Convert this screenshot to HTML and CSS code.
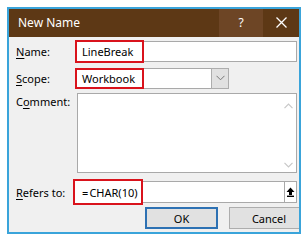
FILE: index.html
```html
<!DOCTYPE html>
<html>
<head>
<meta charset="utf-8">
<link rel="stylesheet" href="styles.css">
</head>
<body>
<div class="dialog">
  <div class="titlebar">
    <span class="title">New Name</span>
    <span class="help">?</span>
    <span class="close">
      <svg width="11" height="11" viewBox="0 0 11 11"><path d="M0.5 0.5 L10.5 10.5 M10.5 0.5 L0.5 10.5" stroke="#fff" stroke-width="1.3" fill="none"/></svg>
    </span>
  </div>
  <div class="content">
    <div class="row r-name">
      <label class="lbl"><u>N</u>ame:</label>
      <div class="field"><span class="hl">LineBreak</span></div>
    </div>
    <div class="row r-scope">
      <label class="lbl"><u>S</u>cope:</label>
      <div class="field select"><span class="hl">Workbook</span>
        <span class="dd"><svg width="9" height="6" viewBox="0 0 9 6"><path d="M0.5 0.8 L4.5 4.8 L8.5 0.8" stroke="#777" stroke-width="1" fill="none"/></svg></span>
      </div>
    </div>
    <div class="row r-comment">
      <label class="lbl lbl-top">C<u>o</u>mment:</label>
      <div class="textarea">
        <div class="scroll">
          <svg width="9" height="6" viewBox="0 0 9 6"><path d="M0.5 5.2 L4.5 1.2 L8.5 5.2" stroke="#c8c8c8" stroke-width="1.2" fill="none"/></svg>
          <svg width="9" height="6" viewBox="0 0 9 6"><path d="M0.5 0.8 L4.5 4.8 L8.5 0.8" stroke="#c8c8c8" stroke-width="1.2" fill="none"/></svg>
        </div>
      </div>
    </div>
    <div class="row r-refers">
      <label class="lbl"><u>R</u>efers to:</label>
      <div class="ref">
        <span class="hl hl-ref">=&#8202;CHAR(10)</span>
        <span class="refbtn"><svg width="9" height="10" viewBox="0 0 9 10"><path d="M4.5 0.5 L8.5 5 L6 5 L6 8 L3 8 L3 5 L0.5 5 Z" fill="#000"/><rect x="1" y="8.6" width="7" height="1.4" fill="#000"/></svg></span>
      </div>
    </div>
    <div class="row r-buttons">
      <button class="btn ok">OK</button>
      <button class="btn cancel">Cancel</button>
    </div>
  </div>
</div>
</body>
</html>
```
FILE: styles.css
```css
* { box-sizing: border-box; }
html, body { margin: 0; padding: 0; background: #fff; }
body {
  font-family: "Noto Sans", "Open Sans", sans-serif;
  font-size: 11px;
  color: #000;
  width: 307px;
  height: 241px;
  overflow: hidden;
}
.dialog {
  margin: 7px 0 0 7px;
  width: 294px;
  height: 227px;
  border: 2px solid #3aa4da;
  background: #f0f0f0;
  display: flex;
  flex-direction: column;
  overflow: hidden;
}
.titlebar {
  height: 28px;
  background: #5d3815;
  display: flex;
  align-items: stretch;
  color: #fff;
  flex: none;
}
.title {
  flex: 1;
  padding-left: 9px;
  font-size: 12px;
  line-height: 28px;
}
.help {
  width: 44px;
  background: #6d4525;
  text-align: center;
  font-size: 12px;
  line-height: 28px;
}
.close {
  width: 36px;
  display: flex;
  align-items: center;
  justify-content: center;
  padding-bottom: 1px;
}
.content {
  flex: 1;
  padding: 3px 2px 0 7px;
  display: flex;
  flex-direction: column;
}
.row { display: flex; align-items: center; }
.lbl {
  width: 59px;
  flex: none;
  white-space: nowrap;
}
.lbl u { text-decoration-thickness: 1px; text-underline-offset: 2px; }
.r-name { height: 23px; }
.r-scope { height: 22px; margin-top: 4px; }
.r-comment { height: 80px; margin-top: 4px; align-items: flex-start; }
.r-refers { height: 26px; margin-top: 6px; }
.r-buttons { height: 22px; margin-top: 2px; padding-left: 129px; gap: 11px; }
.lbl-top { padding-top: 1px; }
.field {
  flex: 1;
  height: 21px;
  background: #fff;
  border: 1px solid #a9a9a9;
  display: flex;
  align-items: stretch;
}
.r-name .field { height: 21px; }
.hl {
  border: 2px solid #d9131c;
  margin: -2px 0 -2px -1px;
  width: 69px;
  padding-left: 5px;
  display: flex;
  align-items: center;
  background: #fff;
  white-space: nowrap;
}
.select {
  flex: none;
  width: 154px;
  height: 21px;
  justify-content: space-between;
}
.r-scope .hl { margin: -1px 0 -1px -1px; }
.dd {
  width: 18px;
  margin: -1px -1px -1px 0;
  background: #e1e1e1;
  border: 1px solid #adadad;
  display: flex;
  align-items: center;
  justify-content: center;
}
.textarea {
  flex: 1;
  margin-left: 2px;
  height: 80px;
  background: #fff;
  border: 1px solid #a9a9a9;
  display: flex;
  justify-content: flex-end;
}
.scroll {
  width: 16px;
  display: flex;
  flex-direction: column;
  justify-content: space-between;
  align-items: center;
  padding: 9px 0 4px;
  background: #fff;
}
.ref {
  flex: 1;
  margin-left: 2px;
  height: 22px;
  background: #fff;
  border: 1px solid #a9a9a9;
  display: flex;
  justify-content: space-between;
  align-items: stretch;
}
.hl-ref {
  margin: -3px 0 -3px -5px;
  width: 70px;
  padding-left: 7px;
  height: 26px;
}
.refbtn {
  width: 12px;
  border-left: 1px solid #a9a9a9;
  background: #fff;
  display: flex;
  align-items: center;
  justify-content: center;
}
.btn {
  font-family: inherit;
  font-size: 11px;
  height: 22px;
  background: #e1e1e1;
  border: 1px solid #adadad;
  padding: 0;
  color: #000;
  flex: none;
}
.ok { width: 73px; border: 2px solid #2d71b3; }
.cancel { width: 80px; }
```
